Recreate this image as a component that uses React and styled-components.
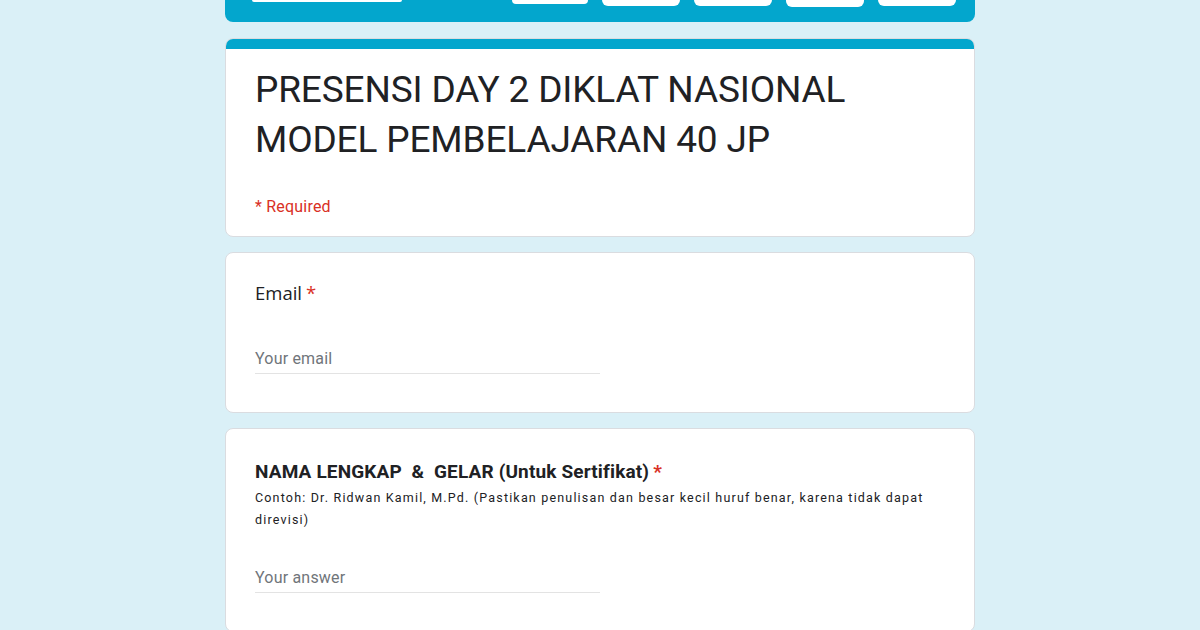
import React from 'react'
import styled, { createGlobalStyle } from 'styled-components'

const GlobalStyle = createGlobalStyle`
  html, body {
    margin: 0;
    padding: 0;
    background: #daf0f7;
    font-family: Roboto, "Liberation Sans", sans-serif;
  }
`

const Page = styled.div`
  width: 750px;
  margin: 0 auto;
  display: flex;
  flex-direction: column;
  gap: 15px;
  padding-bottom: 40px;
`

const Banner = styled.div`
  height: 22px;
  margin-bottom: 1px;
  background: #03a6cd;
  border-radius: 0 0 8px 8px;
  display: flex;
  align-items: flex-start;
  padding: 0 19px 0 27px;
`

const Pill = styled.div`
  width: ${p => p.w}px;
  height: ${p => p.h}px;
  margin-left: ${p => p.gap}px;
  background: #fff;
  border-radius: 0 0 6px 6px;
`

const Card = styled.div`
  background: #fff;
  border: 1px solid #dadce0;
  border-radius: 8px;
  overflow: hidden;
`

const Accent = styled.div`
  height: 10px;
  background: #03a6cd;
`

const CardBody = styled.div`
  padding: ${p => p.pad};
`

const Title = styled.h1`
  margin: 0;
  font-family: Roboto, sans-serif;
  font-weight: 400;
  font-size: 37px;
  line-height: 50px;
  letter-spacing: -0.15px;
  color: #202124;
`

const Required = styled.div`
  margin-top: 32px;
  font-size: 16px;
  color: #d93025;
  letter-spacing: 0.2px;
`

const Question = styled.div`
  font-family: ${p => (p.bold ? 'Roboto, sans-serif' : '"Open Sans", sans-serif')};
  font-weight: ${p => (p.bold ? 700 : 400)};
  font-size: ${p => (p.bold ? 19 : 18.5)}px;
  letter-spacing: ${p => (p.bold ? '0.15px' : '0')};
  color: #202124;
  line-height: 24px;
`

const Star = styled.span`
  color: #d93025;
  margin-left: 4px;
`

const Help = styled.div`
  margin-top: 3px;
  font-size: 12.5px;
  line-height: 22px;
  letter-spacing: 1.18px;
  color: #202124;
`

const Answer = styled.div`
  width: 50%;
  margin-top: ${p => p.mt}px;
  padding-bottom: 5px;
  border-bottom: 1px solid #e3e3e3;
  font-size: 16px;
  color: #70757a;
  letter-spacing: 0.2px;
`

const pills = [
  { w: 150, h: 2, gap: 0 },
  { w: 76, h: 4, gap: 110 },
  { w: 78, h: 6, gap: 14 },
  { w: 78, h: 6, gap: 14 },
  { w: 78, h: 7, gap: 14 },
  { w: 78, h: 6, gap: 14 }
]

const App = () => {
  return (
    <>
      <GlobalStyle />
      <Page>
        <Banner>
          {pills.map((p, i) => (
            <Pill key={i} w={p.w} h={p.h} gap={p.gap} />
          ))}
        </Banner>
        <Card>
          <Accent />
          <CardBody pad='16px 29px 20px'>
            <Title>
              PRESENSI DAY 2 DIKLAT NASIONAL
              <br />
              MODEL PEMBELAJARAN 40 JP
            </Title>
            <Required>* Required</Required>
          </CardBody>
        </Card>
        <Card>
          <CardBody pad='28px 29px 38px'>
            <Question>
              Email<Star>*</Star>
            </Question>
            <Answer mt={44}>Your email</Answer>
          </CardBody>
        </Card>
        <Card>
          <CardBody pad='31px 29px 38px'>
            <Question bold>
              NAMA LENGKAP &nbsp;&amp;&nbsp; GELAR (Untuk Sertifikat)<Star>*</Star>
            </Question>
            <Help>
              Contoh: Dr. Ridwan Kamil, M.Pd. (Pastikan penulisan dan besar kecil huruf benar, karena tidak dapat
              direvisi)
            </Help>
            <Answer mt={37}>Your answer</Answer>
          </CardBody>
        </Card>
      </Page>
    </>
  )
}

export default App
